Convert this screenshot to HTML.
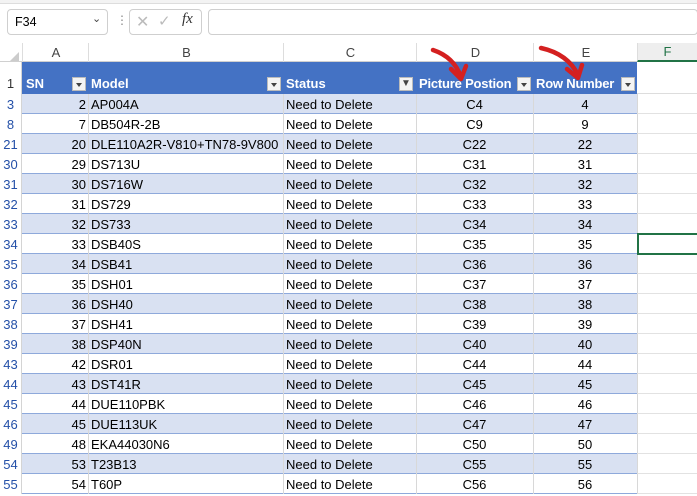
<!DOCTYPE html>
<html><head><style>
*{margin:0;padding:0;box-sizing:border-box}
body{width:697px;height:496px;overflow:hidden;background:#fff;font-family:"Liberation Sans",Arial,sans-serif;position:relative}
.a{position:absolute}
.cell{position:absolute;font-size:13px;line-height:21px;color:#000;white-space:nowrap;overflow:hidden}
.rh{position:absolute;left:0;width:22px;font-size:13px;line-height:21px;color:#2450a8;text-align:center;background:#fff;border-right:1px solid #d4d4d4}
.dd{position:absolute;width:14px;height:14px;background:#f4f4f4;border:1px solid #bbb}
.dd:after{content:"";position:absolute;left:3px;top:5px;border-left:3.5px solid transparent;border-right:3.5px solid transparent;border-top:4px solid #444}
</style></head><body>
<div class="a" style="left:0;top:0;width:697px;height:4px;background:#f3f3f3;border-bottom:1px solid #ddd"></div>
<div class="a" style="left:7px;top:9px;width:101px;height:26px;border:1px solid #cfcfcf;border-radius:4px;font-size:12.5px;line-height:24px;padding-left:7px">F34</div>
<div class="a" style="left:92px;top:12px;font-size:11px;color:#444">&#8964;</div>
<div class="a" style="left:116px;top:13px;font-size:12px;color:#888">&#8942;</div>
<div class="a" style="left:129px;top:9px;width:73px;height:26px;border:1px solid #cfcfcf;border-radius:4px"></div>
<div class="a" style="left:136px;top:12px;font-size:16px;color:#bbb">&#10005;</div>
<div class="a" style="left:158px;top:12px;font-size:15px;color:#bbb">&#10003;</div>
<div class="a" style="left:182px;top:11px;font-size:15px;font-style:italic;font-family:'Liberation Serif',serif;color:#333">fx</div>
<div class="a" style="left:208px;top:9px;width:490px;height:26px;border:1px solid #cfcfcf;border-radius:4px"></div>
<div class="a" style="left:0;top:43px;width:697px;height:19px;background:#fff;border-bottom:1px solid #d0d0d0"></div>
<div class="a" style="left:10px;top:52px;width:0;height:0;border-left:9px solid transparent;border-bottom:9px solid #ccc"></div>
<div class="a" style="left:22px;top:43px;width:67px;height:19px;border-left:1px solid #ddd;text-align:center;font-size:13px;line-height:19px;color:#444">A</div>
<div class="a" style="left:88px;top:43px;width:196px;height:19px;border-left:1px solid #ddd;text-align:center;font-size:13px;line-height:19px;color:#444">B</div>
<div class="a" style="left:283px;top:43px;width:134px;height:19px;border-left:1px solid #ddd;text-align:center;font-size:13px;line-height:19px;color:#444">C</div>
<div class="a" style="left:416px;top:43px;width:118px;height:19px;border-left:1px solid #ddd;text-align:center;font-size:13px;line-height:19px;color:#444">D</div>
<div class="a" style="left:533px;top:43px;width:105px;height:19px;border-left:1px solid #ddd;text-align:center;font-size:13px;line-height:19px;color:#444">E</div>
<div class="a" style="left:637px;top:43px;width:60px;height:19px;border-left:1px solid #ddd;background:#eeeeee;border-bottom:2px solid #217346;text-align:center;font-size:13px;line-height:18px;color:#217346">F</div>
<div class="rh" style="top:62px;height:32px;line-height:44px;color:#333">1</div>
<div class="a" style="left:22px;top:62px;width:615px;height:32px;background:#4472c4"></div>
<div class="a" style="left:26px;top:74px;font-size:13px;font-weight:bold;color:#fff;line-height:20px">SN</div>
<div class="dd" style="left:72px;top:77px"></div>
<div class="a" style="left:91px;top:74px;font-size:13px;font-weight:bold;color:#fff;line-height:20px">Model</div>
<div class="dd" style="left:267px;top:77px"></div>
<div class="a" style="left:286px;top:74px;font-size:13px;font-weight:bold;color:#fff;line-height:20px">Status</div>
<div class="a" style="left:399px;top:77px;width:14px;height:14px;background:#f4f4f4;border:1px solid #bbb;font-size:10px;line-height:12px;text-align:center;color:#444">&#9660;</div>
<div class="a" style="left:419px;top:74px;font-size:13px;font-weight:bold;color:#fff;line-height:20px;letter-spacing:-0.2px">Picture Postion</div>
<div class="dd" style="left:517px;top:77px"></div>
<div class="a" style="left:536px;top:74px;font-size:13px;font-weight:bold;color:#fff;line-height:20px;letter-spacing:-0.2px">Row Number</div>
<div class="dd" style="left:621px;top:77px"></div>
<div class="a" style="left:637px;top:62px;width:60px;height:32px;border-bottom:1px solid #ddd"></div>
<svg class="a" style="left:0;top:0" width="697" height="100">
<path d="M433 50 Q454 57 461 77" stroke="#d42020" stroke-width="4.5" fill="none" stroke-linecap="round"/>
<path d="M451 69 L461 79 L466 66" stroke="#d42020" stroke-width="4.5" fill="none" stroke-linecap="round" stroke-linejoin="round"/>
<path d="M541 48 Q568 54 578 75" stroke="#d42020" stroke-width="4.5" fill="none" stroke-linecap="round"/>
<path d="M567 69 L578 78 L582 65" stroke="#d42020" stroke-width="4.5" fill="none" stroke-linecap="round" stroke-linejoin="round"/>
</svg>
<div id="rows"></div>
<script>
var d=[[3,2,"AP004A","C4",4],[8,7,"DB504R-2B","C9",9],[21,20,"DLE110A2R-V810+TN78-9V800","C22",22],[30,29,"DS713U","C31",31],[31,30,"DS716W","C32",32],[32,31,"DS729","C33",33],[33,32,"DS733","C34",34],[34,33,"DSB40S","C35",35],[35,34,"DSB41","C36",36],[36,35,"DSH01","C37",37],[37,36,"DSH40","C38",38],[38,37,"DSH41","C39",39],[39,38,"DSP40N","C40",40],[43,42,"DSR01","C44",44],[44,43,"DST41R","C45",45],[45,44,"DUE110PBK","C46",46],[46,45,"DUE113UK","C47",47],[49,48,"EKA44030N6","C50",50],[54,53,"T23B13","C55",55],[55,54,"T60P","C56",56]];
var h="";
d.forEach(function(r,i){var y=94+i*20;var bg=i%2==0?"#d9e1f2":"#fff";
h+='<div class="a" style="left:22px;top:'+y+'px;width:615px;height:20px;background:'+bg+';border-bottom:1px solid #8ea9db"></div>';
[88,283,416,533].forEach(function(x){h+='<div class="a" style="left:'+x+'px;top:'+y+'px;width:1px;height:20px;background:#d8d8d8"></div>'});
h+='<div class="a" style="left:637px;top:'+y+'px;width:60px;height:20px;border-left:1px solid #d8d8d8;border-bottom:1px solid #e2e2e2"></div>';
h+='<div class="rh" style="top:'+y+'px;height:20px">'+r[0]+'</div>';
h+='<div class="cell" style="left:22px;top:'+y+'px;width:64px;text-align:right">'+r[1]+'</div>';
h+='<div class="cell" style="left:91px;top:'+y+'px">'+r[2]+'</div>';
h+='<div class="cell" style="left:286px;top:'+y+'px">Need to Delete</div>';
h+='<div class="cell" style="left:416px;top:'+y+'px;width:117px;text-align:center">'+r[3]+'</div>';
h+='<div class="cell" style="left:533px;top:'+y+'px;width:104px;text-align:center">'+r[4]+'</div>';
});
h+='<div class="a" style="left:637px;top:233px;width:60px;height:22px;border:2px solid #217346;border-right:none"></div>';
document.getElementById("rows").innerHTML=h;
</script>
</body></html>
